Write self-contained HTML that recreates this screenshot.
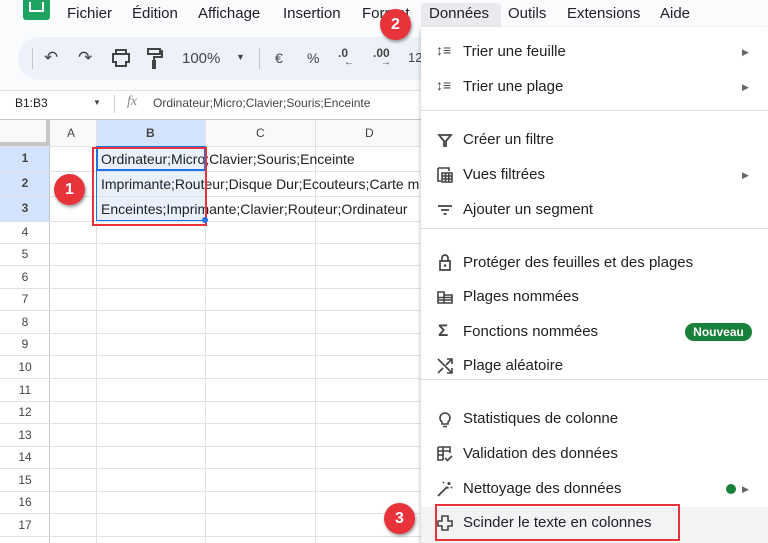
<!DOCTYPE html><html><head><meta charset="utf-8"><style>
*{margin:0;padding:0;box-sizing:border-box}
body{width:768px;height:543px;overflow:hidden;position:relative;background:#fff;font-family:"Liberation Sans",sans-serif;color:#202124}
.a{position:absolute}
.mb{top:5px;font-size:15px;color:#202124}
.hl{position:absolute;left:0;width:421px;height:1px;background:#e1e1e1}
.vl{position:absolute;top:120px;bottom:0;width:1px;background:#e1e1e1}
.rn{position:absolute;left:0;width:50px;text-align:center;font-size:12px;color:#444}
.mi{position:absolute;left:463px;font-size:15px;color:#202124}
.ic{position:absolute;left:436px;width:18px;height:18px}
.ar{position:absolute;left:742px;font-size:9px;color:#666}
.dv{position:absolute;left:421px;width:347px;height:1px;background:#e0e0e0}
.badge{position:absolute;width:31px;height:31px;border-radius:50%;background:#e8333a;color:#fff;font-weight:bold;font-size:16px;text-align:center;line-height:31px;box-shadow:1px 2px 3px rgba(0,0,0,.4)}
</style></head><body>
<div class="a" style="left:0;top:0;width:768px;height:120px;background:#f9fbfd"></div>
<div class="a" style="left:23px;top:0;width:27px;height:20px;background:#1ea362;border-radius:0 0 3px 3px"></div>
<div class="a" style="left:29px;top:2px;width:15px;height:10px;border:2px solid #fff;border-top:none"></div>
<div class="a mb" style="left:67px">Fichier</div>
<div class="a mb" style="left:132px">Édition</div>
<div class="a mb" style="left:198px">Affichage</div>
<div class="a mb" style="left:283px">Insertion</div>
<div class="a mb" style="left:362px">Format</div>
<div class="a" style="left:421px;top:3px;width:80px;height:24px;background:#e8eaed;border-radius:4px 4px 0 0"></div>
<div class="a mb" style="left:429px">Données</div>
<div class="a mb" style="left:508px">Outils</div>
<div class="a mb" style="left:567px">Extensions</div>
<div class="a mb" style="left:660px">Aide</div>
<div class="a" style="left:18px;top:37px;width:420px;height:43px;background:#edf2fa;border-radius:22px"></div>
<div class="a" style="left:32px;top:48px;width:1px;height:21px;background:#c4c7c5"></div>
<div class="a" style="left:44px;top:48px;font-size:17px;color:#444">↶</div>
<div class="a" style="left:78px;top:48px;font-size:17px;color:#444">↷</div>
<svg class="a" style="left:111px;top:49px" width="20" height="18" viewBox="0 0 20 18"><path d="M5 1h10v4H5zM2 5h16v8h-3v4H5v-4H2z" fill="none" stroke="#444" stroke-width="2"/></svg>
<svg class="a" style="left:146px;top:47px" width="18" height="22" viewBox="0 0 18 22"><path d="M2 2h12v5H2zM14 4h2v6H8v4M7 14h2v7H7z" fill="none" stroke="#444" stroke-width="2"/></svg>
<div class="a" style="left:182px;top:50px;font-size:15px;color:#444">100%</div>
<div class="a" style="left:236px;top:52px;font-size:9px;color:#444">▼</div>
<div class="a" style="left:259px;top:48px;width:1px;height:21px;background:#c4c7c5"></div>
<div class="a" style="left:275px;top:50px;font-size:14px;color:#444">€</div>
<div class="a" style="left:307px;top:50px;font-size:14px;color:#444">%</div>
<div class="a" style="left:338px;top:46px;font-size:12px;font-weight:bold;color:#444">.0<br><span style="font-size:10px;position:relative;top:-6px;left:6px">←</span></div>
<div class="a" style="left:373px;top:46px;font-size:12px;font-weight:bold;color:#444">.00<br><span style="font-size:10px;position:relative;top:-6px;left:8px">→</span></div>
<div class="a" style="left:408px;top:50px;font-size:13px;color:#444">12</div>
<div class="a" style="left:0;top:90px;width:768px;height:30px;background:#fff;border-top:1px solid #e1e1e1"></div>
<div class="a" style="left:15px;top:96px;font-size:12px">B1:B3</div>
<div class="a" style="left:93px;top:98px;font-size:8px;color:#444">▼</div>
<div class="a" style="left:114px;top:95px;width:1px;height:18px;background:#ccc"></div>
<div class="a" style="left:127px;top:94px;font-size:14px;font-style:italic;font-family:'Liberation Serif',serif;color:#888">fx</div>
<div class="a" style="left:153px;top:96px;font-size:12px;color:#444">Ordinateur;Micro;Clavier;Souris;Enceinte</div>
<div class="a" style="left:0;top:119px;width:421px;height:1px;background:#c4c7c5"></div>
<div class="a" style="left:0;top:120px;width:421px;height:26px;background:#f8f9fa"></div>
<div class="a" style="left:0;top:120px;width:50px;height:26px;background:#f8f9fa;border-right:4px solid #c4c7c5;border-bottom:4px solid #c4c7c5"></div>
<div class="a" style="left:97px;top:120px;width:109px;height:26px;background:#d3e3fd"></div>
<div class="a" style="left:0;top:146px;width:50px;height:75px;background:#d3e3fd"></div>
<div class="a" style="left:97px;top:146px;width:109px;height:75px;background:#e8f0fe"></div>
<div class="a" style="left:0;top:146px;width:50px;height:397px;border-right:1px solid #c4c7c5"></div>
<div class="a" style="left:67px;top:126px;font-size:12px;color:#444">A</div>
<div class="a" style="left:146px;top:126px;font-size:12px;color:#444;font-weight:bold">B</div>
<div class="a" style="left:256px;top:126px;font-size:12px;color:#444">C</div>
<div class="a" style="left:365px;top:126px;font-size:12px;color:#444">D</div>
<div class="vl" style="left:96px"></div><div class="vl" style="left:205px"></div><div class="vl" style="left:315px"></div>
<div class="hl" style="top:146px"></div><div class="hl" style="top:171px"></div><div class="hl" style="top:196px"></div><div class="hl" style="top:221px"></div>
<div class="hl" style="top:243px"></div><div class="hl" style="top:265px"></div><div class="hl" style="top:288px"></div><div class="hl" style="top:310px"></div><div class="hl" style="top:333px"></div><div class="hl" style="top:355px"></div><div class="hl" style="top:378px"></div><div class="hl" style="top:401px"></div><div class="hl" style="top:423px"></div><div class="hl" style="top:446px"></div><div class="hl" style="top:468px"></div><div class="hl" style="top:491px"></div><div class="hl" style="top:513px"></div><div class="hl" style="top:536px"></div>
<div class="rn" style="top:151px;font-weight:bold">1</div><div class="rn" style="top:176px;font-weight:bold">2</div><div class="rn" style="top:201px;font-weight:bold">3</div>
<div class="rn" style="top:225px">4</div><div class="rn" style="top:247px">5</div><div class="rn" style="top:270px">6</div><div class="rn" style="top:292px">7</div><div class="rn" style="top:315px">8</div><div class="rn" style="top:337px">9</div><div class="rn" style="top:360px">10</div><div class="rn" style="top:383px">11</div><div class="rn" style="top:405px">12</div><div class="rn" style="top:428px">13</div><div class="rn" style="top:450px">14</div><div class="rn" style="top:473px">15</div><div class="rn" style="top:495px">16</div><div class="rn" style="top:518px">17</div>
<div class="a" style="left:101px;top:151px;font-size:14px">Ordinateur;Micro;Clavier;Souris;Enceinte</div>
<div class="a" style="left:101px;top:176px;font-size:14px;white-space:nowrap;width:320px;overflow:hidden">Imprimante;Routeur;Disque Dur;Ecouteurs;Carte m</div>
<div class="a" style="left:101px;top:201px;font-size:14px;white-space:nowrap;width:320px;overflow:hidden">Enceintes;Imprimante;Clavier;Routeur;Ordinateur</div>
<div class="a" style="left:96px;top:146px;width:110px;height:75px;border:1px solid #1a73e8"></div>
<div class="a" style="left:96px;top:146px;width:110px;height:25px;border:2px solid #1a73e8"></div>
<div class="a" style="left:92px;top:147px;width:115px;height:79px;border:2px solid #e8333a;border-top:none"></div>
<div class="a" style="left:92px;top:147px;width:115px;height:2px;background:#e8333a"></div>
<div class="a" style="left:202px;top:217px;width:6px;height:6px;border-radius:50%;background:#1a73e8"></div>
<div class="badge" style="left:54px;top:174px">1</div>
<div class="a" style="left:421px;top:27px;width:347px;height:516px;background:#fff;box-shadow:-1px 2px 4px rgba(0,0,0,.2)"></div>
<div class="badge" style="left:380px;top:9px">2</div>
<div class="dv" style="top:110px"></div><div class="dv" style="top:228px"></div><div class="dv" style="top:379px"></div>
<div class="a" style="left:421px;top:507px;width:347px;height:36px;background:#f1f3f4"></div>
<div class="a" style="left:435px;top:504px;width:245px;height:37px;border:2px solid #e8333a"></div>
<div class="ic" style="top:42px;font-size:14px;color:#444">↕≡</div><div class="mi" style="top:43px">Trier une feuille</div><div class="ar" style="top:47px">▶</div>
<div class="ic" style="top:77px;font-size:14px;color:#444">↕≡</div><div class="mi" style="top:78px">Trier une plage</div><div class="ar" style="top:82px">▶</div>
<svg class="ic" style="top:131px" viewBox="0 0 18 18"><path d="M3 4h12l-5 6v5h-2v-5z" fill="none" stroke="#444" stroke-width="1.8"/></svg><div class="mi" style="top:131px">Créer un filtre</div>
<svg class="ic" style="top:166px" viewBox="0 0 18 18"><path d="M2 2h11v3M2 2v13h3M6 7h10v9H6zM6 10h10M6 13h10M9.5 7v9M12.8 7v9" fill="none" stroke="#444" stroke-width="1.6"/></svg><div class="mi" style="top:166px">Vues filtrées</div><div class="ar" style="top:170px">▶</div>
<svg class="ic" style="top:201px" viewBox="0 0 18 18"><path d="M2 5h14M5 9h8M7.5 13h3" stroke="#444" stroke-width="1.8"/></svg><div class="mi" style="top:201px">Ajouter un segment</div>
<svg class="ic" style="top:253px" viewBox="0 0 18 18"><path d="M4 8h10v9H4zM6 8V5a3 3 0 0 1 6 0v3" fill="none" stroke="#444" stroke-width="1.7"/><circle cx="9" cy="12.5" r="1.3" fill="#444"/></svg><div class="mi" style="top:254px">Protéger des feuilles et des plages</div>
<svg class="ic" style="top:288px" viewBox="0 0 18 18"><path d="M2 4h6v11H2zM8 7h8v8H8zM2 9.5h14M2 12h14" fill="none" stroke="#444" stroke-width="1.6"/></svg><div class="mi" style="top:288px">Plages nommées</div>
<div class="ic" style="top:321px;font-size:17px;font-weight:bold;color:#444;left:438px">Σ</div><div class="mi" style="top:323px">Fonctions nommées</div>
<div class="a" style="left:685px;top:323px;width:67px;height:18px;border-radius:9px;background:#188038;color:#fff;font-size:12px;font-weight:bold;text-align:center;line-height:18px">Nouveau</div>
<svg class="ic" style="top:357px" viewBox="0 0 18 18"><path d="M2 2l14 14M11 16h5v-5M11 2h5v5M16 2L10 8M2 16l5-5" fill="none" stroke="#444" stroke-width="1.6"/></svg><div class="mi" style="top:357px">Plage aléatoire</div>
<svg class="ic" style="top:410px" viewBox="0 0 18 18"><path d="M6 12a5 5 0 1 1 6 0v2H6zM7 16.5h4" fill="none" stroke="#444" stroke-width="1.6"/></svg><div class="mi" style="top:410px">Statistiques de colonne</div>
<svg class="ic" style="top:445px" viewBox="0 0 18 18"><path d="M2 2h12v6M2 2v13h5M2 6h12M2 10h6M7 2v13M9 13l2.5 2.5L16 11" fill="none" stroke="#444" stroke-width="1.6"/></svg><div class="mi" style="top:445px">Validation des données</div>
<svg class="ic" style="top:480px" viewBox="0 0 18 18"><path d="M2 16l9-9M11 7l1.5 1.5M13 2v3M11.5 3.5h3M16 7l-1 1M7 2l1 1" fill="none" stroke="#444" stroke-width="1.8"/></svg><div class="mi" style="top:480px">Nettoyage des données</div>
<div class="a" style="left:726px;top:484px;width:10px;height:10px;border-radius:50%;background:#188038"></div><div class="ar" style="top:484px">▶</div>
<svg class="ic" style="top:514px" viewBox="0 0 18 18"><path d="M6 2h6v5h4v5h-4v4H6v-4H2V7h4z" fill="none" stroke="#444" stroke-width="1.6"/></svg><div class="mi" style="top:514px">Scinder le texte en colonnes</div>
<div class="badge" style="left:384px;top:503px">3</div>
</body></html>
